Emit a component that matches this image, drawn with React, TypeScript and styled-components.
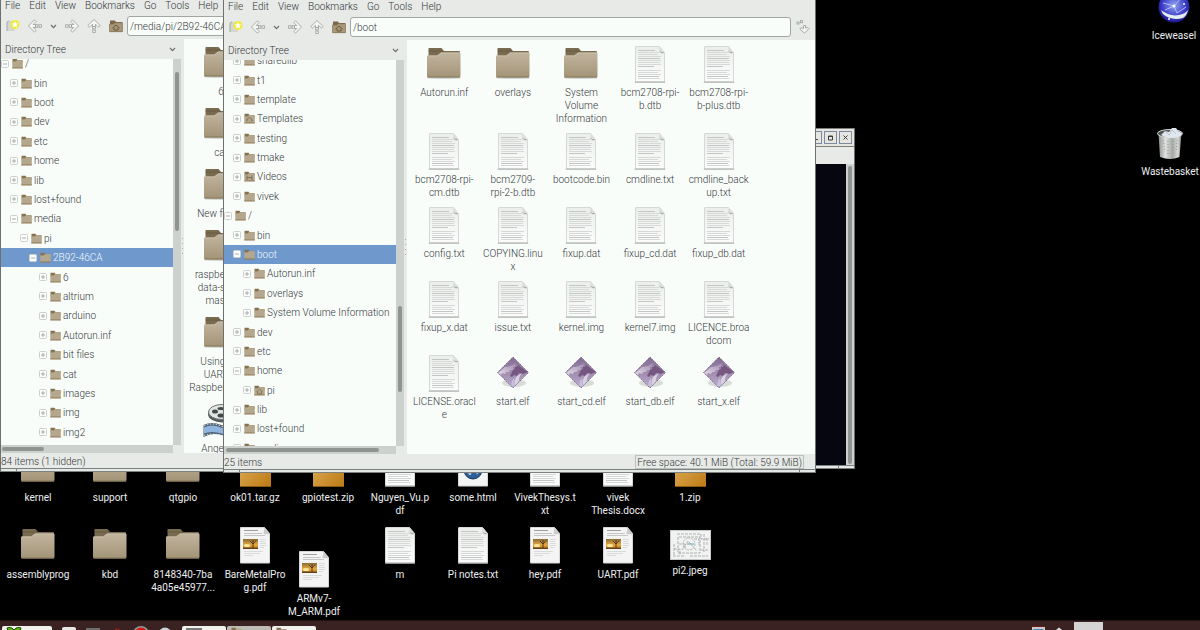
import React, { useId } from "react";
import styled, { createGlobalStyle, css } from "styled-components";

const GlobalStyle = createGlobalStyle`
  *, *::before, *::after { box-sizing: border-box; }
  body { margin: 0; background: #000; font: 300 10px/13px Roboto, "Liberation Sans", sans-serif; color: #34383a; }
  button, input { font: inherit; color: inherit; margin: 0; padding: 0; border: 0; background: none; }
  ul { list-style: none; margin: 0; padding: 0; }
  svg { display: block; flex: none; }
`;

/* ---------- drawings ---------- */

const FolderIcon = () => {
  const id = useId();
  return (
    <svg width="36" height="32" viewBox="0 0 36 32" aria-hidden="true">
      <defs>
        <linearGradient id={id} x1="0" y1="0" x2="0" y2="1">
          <stop offset="0" stopColor="#c2b59f" />
          <stop offset="1" stopColor="#a39477" />
        </linearGradient>
      </defs>
      <ellipse cx="18" cy="31" rx="17" ry="1" fill="#000" opacity="0.15" />
      <path d="M2.500 10V1.500q0-.5.5-.5h12.500l2.500 3H33q1 0 1 1v5z" fill="#796b50" />
      <path d="M2.500 4h14l1 1.500H34" stroke="#5d5139" strokeWidth="1" fill="none" opacity="0.6" />
      <path d="M1 9.500Q1 8.500 2 8.500h9l4-3h18.500q1 0 1 1V29q0 1.500-1.500 1.500H2.500Q1 30.500 1 29z" fill={`url(#${id})`} />
      <path d="M1.500 9h10l4-3H34" stroke="#cabea8" fill="none" />
      <path d="M1.500 30H34" stroke="#85765a" fill="none" />
    </svg>
  );
};

const SmallFolderIcon = ({ emblem }: { emblem?: string }) => (
  <svg width="11" height="11" viewBox="0 0 11 11" aria-hidden="true">
    <path d="M.5 5V.8h4l1 1.200h5V5z" fill="#85724f" />
    <path d="M.3 4h3.200L5 2.800h5.800V10H.3z" fill="#b5a78d" />
    <path d="M.3 3.800h3.200L5 2.600h5.800" stroke="#cabfa9" strokeWidth=".6" fill="none" />
    <path d="M.3 10h10.500" stroke="#8f7650" strokeWidth="1" />
    {emblem === "home" && <path d="M2.500 6.800 5.500 4.300l3 2.500M3.600 6.500V9h3.800V6.500" stroke="#7d6f55" strokeWidth=".9" fill="none" />}
    {emblem === "template" && <path d="M3 8.500V6l2.500-1.500L8.500 7 7 8.500" stroke="#7d6f55" fill="none" />}
    {emblem === "video" && <path d="M3 4.500V9M8 4.500V9M3 6.500h5" stroke="#7d6f55" fill="none" />}
  </svg>
);

const textLines: [number, number][] = [
  [4.5, 17], [6.5, 22], [8.5, 20], [10.5, 23], [12.5, 22], [14.5, 23], [16.5, 22], [18.5, 23],
  [20.5, 16], [24.5, 23], [26.5, 20], [28.5, 23], [30.5, 21], [32.5, 22],
];

const DocIcon = () => {
  const id = useId();
  return (
    <svg width="32" height="37" viewBox="0 0 32 37" aria-hidden="true">
      <defs>
        <linearGradient id={id} x1="0" y1="0" x2="0" y2="1">
          <stop offset="0" stopColor="#eceeec" />
          <stop offset="1" stopColor="#fbfcfb" />
        </linearGradient>
      </defs>
      <ellipse cx="16" cy="36.200" rx="16" ry=".8" fill="#000" opacity="0.2" />
      <path d="M1.500 1Q1.500.5 2 .5h23.500l5 6V36h-29z" fill={`url(#${id})`} stroke="#d5d8d6" />
      <path d="M1 36h30" stroke="#b0b3b1" />
      {textLines.map(([y, w], i) => (
        <path key={y} d={`M4 ${y}h${w}`} stroke={i % 4 ? "#d6d9d7" : "#c3c7c4"} />
      ))}
      <path d="M25.500.5l-1 6.500 6.500.5z" fill="#dcdfdd" />
      <path d="M26.500 5.500l1 1.200h2" fill="none" stroke="#9a9d9b" />
    </svg>
  );
};

const PdfIcon = () => {
  const id = useId();
  return (
    <svg width="32" height="37" viewBox="0 0 32 37" aria-hidden="true">
      <defs>
        <linearGradient id={id} x1="0" y1="0" x2="0" y2="1">
          <stop offset="0" stopColor="#8b6a35" />
          <stop offset=".6" stopColor="#e8ab45" />
          <stop offset=".8" stopColor="#c98524" />
          <stop offset="1" stopColor="#3d2a16" />
        </linearGradient>
      </defs>
      <path d="M1.500.500h24l5 6V36h-29z" fill="#f3f4f3" stroke="#d5d7d5" />
      <path d="M5 3.500h14" stroke="#9da09e" />
      <path d="M5 6.500h18M5 8.500h21" stroke="#c4c7c5" />
      <path d="M21 12.500h6M21 14.500h5M21 16.500h6M21 18.500h6M21 20.500h4M5 24.500h19M5 26.500h16M5 28.500h9" stroke="#d8dbd9" />
      <rect x="4" y="12" width="15" height="10" fill={`url(#${id})`} />
      <ellipse cx="8" cy="18.500" rx="3" ry="1.500" fill="#ffe9a0" />
      <path d="M14 21v-4l-3-3M14 17l3-3.500M14 17v-4" stroke="#4a2f14" strokeWidth=".9" fill="none" />
      <path d="M25.500.500l-1 6.500 6.500.500z" fill="#c9ccca" />
    </svg>
  );
};

const ZipIcon = () => {
  const id = useId();
  return (
    <svg width="31" height="36" viewBox="0 0 31 36" aria-hidden="true">
      <defs>
        <linearGradient id={id} x1="0" y1="0" x2="1" y2="1">
          <stop offset="0" stopColor="#e2b25c" />
          <stop offset="1" stopColor="#bd7a16" />
        </linearGradient>
      </defs>
      <rect width="31" height="36" fill={`url(#${id})`} />
      <path d="M0 35.500h31" stroke="#8a5a12" />
    </svg>
  );
};

const HtmlIcon = () => (
  <svg width="32" height="37" viewBox="0 0 32 37" aria-hidden="true">
    <path d="M1.500.500h29V36h-29z" fill="#f3f5f4" stroke="#d5d7d5" />
    <circle cx="16" cy="20" r="9" fill="#2f5f96" stroke="#16355c" />
    <path d="M10 20q2-4 5-1l-1 6-2 0zM18 18l5 1-3 6z" fill="#b4c8da" />
  </svg>
);

const ElfIcon = () => {
  const id = useId();
  return (
    <svg width="34" height="37" viewBox="0 0 34 37" aria-hidden="true">
      <defs>
        <linearGradient id={id} x1="0" y1="0" x2="0" y2="1">
          <stop offset="0" stopColor="#836b92" />
          <stop offset=".5" stopColor="#a18cae" />
          <stop offset="1" stopColor="#b9add2" />
        </linearGradient>
        <linearGradient id={`${id}g`} x1="0" y1="1" x2="1" y2="0">
          <stop offset="0" stopColor="#e3dbe8" />
          <stop offset="1" stopColor="#a08dae" />
        </linearGradient>
        <clipPath id={`${id}c`}>
          <path d="M17 2.500 32 17.500 17 32.500 2 17.500z" />
        </clipPath>
      </defs>
      <ellipse cx="18" cy="28" rx="12" ry="4" fill="#000" opacity="0.13" />
      <path d="M17 2 32.500 17.500 17 33 1.500 17.500z" fill={`url(#${id})`} />
      <g clipPath={`url(#${id}c)`}>
        <path d="M2 18 9 12q6 0 11-4l-1 4-2 0 0 3-3 0-1 2-3 0-1 2-3-1-1 2z" fill={`url(#${id}g)`} />
        <path d="M17 15l2-1 0-2 2 0 1-2 10 7-5 2-4-1-2 3-3-1-2 2-2-1z" fill="#755782" />
        <path d="M20 32q-3-7 1-11l5-3q-4 5-3 10z" fill="#d9d0e0" />
        <path d="M15 31l1-5 2-3 1 8z" fill="#c8bdda" />
      </g>
      <path d="M17 2 32.500 17.500 17 33 1.500 17.500z" fill="none" stroke="#715a80" strokeDasharray="1.500 1" strokeWidth=".8" />
    </svg>
  );
};

const FilmIcon = () => (
  <svg width="36" height="34" viewBox="0 0 36 34" aria-hidden="true">
    <ellipse cx="19" cy="10" rx="14" ry="8.500" fill="#555b5b" />
    <ellipse cx="19" cy="8" rx="13.500" ry="7.500" fill="#dfe3e2" stroke="#6e7474" />
    <ellipse cx="12" cy="7.500" rx="3" ry="2" fill="#424848" />
    <ellipse cx="18" cy="4.500" rx="3.500" ry="1.500" fill="#424848" />
    <ellipse cx="18" cy="11.500" rx="3.500" ry="2" fill="#424848" />
    <ellipse cx="26" cy="8" rx="3" ry="2" fill="#424848" />
    <path d="M.500 21q8-4 18 0t17 0v10q-8 3-17 0t-18 2z" fill="#4d5e70" />
    <path d="M1 23.500q8-4 17 0t17 0v6q-8 3-17 0t-17 0z" fill="#8fb4de" />
    <path d="M1 22q8-4 17 0t17 0M1 31.500q8-3 17 0t17 0" stroke="#e8eef2" strokeDasharray="1.500 1.500" fill="none" />
  </svg>
);

const PictureIcon = () => (
  <svg width="41" height="30" viewBox="0 0 41 30" aria-hidden="true">
    <rect width="41" height="30" fill="#f1f3f2" />
    <rect x=".5" y=".5" width="40" height="29" fill="none" stroke="#c6c9c8" />
    <g stroke="#8f9695" strokeWidth=".7" fill="none" strokeDasharray="3 1">
      <path d="M7 4h24M8 7v16h22V7zM4 14v12M34 4v18M37 8v8M3 26h12M20 26h18M31 4v5h8M31 20h7M12 20l6-9 9 10M9 14h6v4M24 9h5v6M4 19h6v6" />
      <circle cx="19" cy="14" r="6" strokeDasharray="2 1" />
    </g>
    <path d="M17 14h7" stroke="#5fa7b0" />
  </svg>
);

const GlobeIcon = () => {
  const id = useId();
  return (
    <svg width="32" height="32" viewBox="0 0 32 32" aria-hidden="true">
      <defs>
        <radialGradient id={id} cx=".5" cy=".45" r=".55">
          <stop offset="0" stopColor="#8fa2ee" />
          <stop offset=".7" stopColor="#3b3cc9" />
          <stop offset="1" stopColor="#1d1784" />
        </radialGradient>
      </defs>
      <circle cx="16" cy="16" r="15.500" fill={`url(#${id})`} />
      <path d="M5 12l11 3 8-9M16 15l3 7 9-6M16 15l-9 4" stroke="#b9c4ff" strokeWidth=".9" fill="none" />
      <circle cx="16" cy="15" r="1.500" fill="#fff" />
      <path d="M3 19q9 7 18 5 6-1 9-5-1 5-5 8-12 3-20-4z" fill="#e4eef0" />
      <circle cx="26" cy="13" r="1" fill="#fff" />
      <circle cx="11" cy="28" r="1" fill="#fff" />
    </svg>
  );
};

const TrashIcon = () => {
  const id = useId();
  return (
    <svg width="28" height="34" viewBox="0 0 28 34" aria-hidden="true">
      <defs>
        <linearGradient id={id} x1="0" y1="0" x2="1" y2="0">
          <stop offset="0" stopColor="#8b8f8c" />
          <stop offset=".3" stopColor="#dfe2df" />
          <stop offset=".6" stopColor="#a6aaa7" />
          <stop offset=".85" stopColor="#d6d9d6" />
          <stop offset="1" stopColor="#7a7e7b" />
        </linearGradient>
      </defs>
      <path d="M2.500 7h23l-2 24q-9 4-19.500 0z" fill={`url(#${id})`} />
      <ellipse cx="14" cy="7.500" rx="12.500" ry="4" fill="#4c504e" stroke="#d3d7d4" />
      <path d="M5 9l4-4 4 1 3-4 4 0 2 3 4 2-1 3-7 2-7 0z" fill="#dfe6ee" />
      <path d="M9 5l4 4 3-5 4 4" stroke="#b3bdc8" fill="none" strokeWidth=".8" />
      <path d="M7 14l2 12M12 15v13M17 15v13M21 14l-1 12" stroke="#949995" strokeDasharray="1 2" fill="none" />
    </svg>
  );
};

const Chevron = () => (
  <svg width="7" height="7" viewBox="0 0 7 7" aria-hidden="true">
    <path d="M1 2l2.500 2.700L6 2" stroke="#6c716f" strokeWidth="1.200" fill="none" />
  </svg>
);

const ArrowIcon = ({ turn = 0 }: { turn?: number }) => (
  <svg width="14" height="14" viewBox="0 0 14 14" aria-hidden="true">
    <g transform={`rotate(${turn} 7 7)`} stroke="#989c9a" strokeWidth=".8" fill="#f4f7f4">
      <path d="M6.500.8 8.200 2.500 5.200 5.500H7.500v3H5.200L8.200 11.500 6.500 13.200.5 7z" />
      <rect x="7.500" y="5.800" width="2.400" height="2.400" />
      <rect x="11" y="5.800" width="2.400" height="2.400" />
    </g>
  </svg>
);

const NewTabIcon = () => (
  <svg width="14" height="14" viewBox="0 0 14 14" aria-hidden="true">
    <path d="M1 12V4q0-2 2-2h6v10z" fill="#d3d7d2" />
    <path d="M1 12V4q0-2 2-2" fill="none" stroke="#a5aaa4" />
    <circle cx="9" cy="5.500" r="4.500" fill="#f1ea3c" />
    <path d="M9 2l1 2.300 2.400.200-1.800 1.600.6 2.400L9 7.300 6.800 8.500l.6-2.400L5.600 4.500 8 4.300z" fill="#fff" />
  </svg>
);

const HomeIcon = () => (
  <svg width="14" height="14" viewBox="0 0 14 14" aria-hidden="true">
    <path d="M1 12.500V1.500h5l1 1.500h6v9.500z" fill="#7b6848" />
    <path d="M.5 5h4l1.500-1.300h7.500v9H.5z" fill="#a8977a" stroke="#7a6545" strokeWidth=".6" />
    <path d="M3.500 9 7 6l3.500 3M5 8.500V11h4V8.500" stroke="#6b5a40" fill="none" />
  </svg>
);

const JumpIcon = () => (
  <svg width="14" height="14" viewBox="0 0 14 14" aria-hidden="true">
    <g stroke="#989c9a" strokeWidth=".8" fill="#f1f4f1">
      <path d="M7.500 5.500h2V8l2.500-.5 1 1-4.500 4.700L3.800 9l1-1.200 2.700.7z" />
      <rect x="1" y="2" width="2" height="2" />
      <rect x="4.500" y=".7" width="2" height="2" />
    </g>
  </svg>
);

const RaspberryMenuIcon = () => (
  <svg width="16" height="8" viewBox="0 0 16 8" aria-hidden="true">
    <path d="M1 1q4-2 6 1l1 1 1-1q2-3 6-1l-2 6H3z" fill="#58b013" stroke="#1d4a06" />
  </svg>
);

const icons = {
  folder: FolderIcon, doc: DocIcon, pdf: PdfIcon, zip: ZipIcon, html: HtmlIcon,
  elf: ElfIcon, film: FilmIcon, picture: PictureIcon, globe: GlobeIcon, trash: TrashIcon,
};
type IconKind = keyof typeof icons;

/* ---------- desktop ---------- */

const Screen = styled.main`
  display: grid;
  grid-template-rows: minmax(0, 1fr) 10px;
  height: 100vh;
  overflow: hidden;
  background: #000;
`;

const Desktop = styled.section`
  position: relative;
  overflow: hidden;
`;

const Tile = styled.button`
  display: flex;
  flex-direction: column;
  align-items: center;
  gap: 3px;
  width: 100%;
`;

const TileIcon = styled.span<{ $kind: IconKind }>`
  display: flex;
  justify-content: center;
  align-items: center;
  height: ${({ $kind }) => ($kind === "picture" ? 31 : 37)}px;
  ${({ $kind }) => $kind === "folder" && css`align-items: flex-start; padding-top: 1px;`}
`;

const TileLabel = styled.span`
  white-space: pre;
  text-align: center;
`;

const Shortcut = styled.div<{ $x: number; $y: number; $fromRight?: boolean }>`
  position: absolute;
  top: ${({ $y }) => $y}px;
  ${({ $fromRight, $x }) => ($fromRight ? `right: ${$x}px;` : `left: ${$x}px;`)}
  width: 74px;
  color: #eceef0;
  font-weight: 400;

  ${Tile} { gap: 4px; }
`;

type FileEntry = { kind: IconKind; name: string };

const FileTile = ({ kind, name }: FileEntry) => {
  const Icon = icons[kind];
  return (
    <Tile type="button">
      <TileIcon $kind={kind}><Icon /></TileIcon>
      <TileLabel>{name}</TileLabel>
    </Tile>
  );
};

const shortcuts: (FileEntry & { x: number; y: number; fromRight?: boolean })[] = [
  { kind: "folder", name: "kernel", x: 1, y: 450 },
  { kind: "folder", name: "support", x: 73, y: 450 },
  { kind: "folder", name: "qtgpio", x: 146, y: 450 },
  { kind: "zip", name: "ok01.tar.gz", x: 218, y: 450 },
  { kind: "zip", name: "gpiotest.zip", x: 291, y: 450 },
  { kind: "doc", name: "Nguyen_Vu.p\ndf", x: 363, y: 450 },
  { kind: "html", name: "some.html", x: 436, y: 450 },
  { kind: "doc", name: "VivekThesys.t\nxt", x: 508, y: 450 },
  { kind: "doc", name: "vivek\nThesis.docx", x: 581, y: 450 },
  { kind: "zip", name: "1.zip", x: 653, y: 450 },
  { kind: "folder", name: "assemblyprog", x: 1, y: 527 },
  { kind: "folder", name: "kbd", x: 73, y: 527 },
  { kind: "folder", name: "8148340-7ba\n4a05e45977...", x: 146, y: 527 },
  { kind: "pdf", name: "BareMetalPro\ng.pdf", x: 218, y: 527 },
  { kind: "pdf", name: "ARMv7-\nM_ARM.pdf", x: 277, y: 551 },
  { kind: "doc", name: "m", x: 363, y: 527 },
  { kind: "doc", name: "Pi notes.txt", x: 436, y: 527 },
  { kind: "pdf", name: "hey.pdf", x: 508, y: 527 },
  { kind: "pdf", name: "UART.pdf", x: 581, y: 527 },
  { kind: "picture", name: "pi2.jpeg", x: 653, y: 529 },
  { kind: "globe", name: "Iceweasel", x: -11, y: -12, fromRight: true },
  { kind: "trash", name: "Wastebasket", x: -7, y: 124, fromRight: true },
];

/* ---------- windows ---------- */

const Window = styled.article<{ $x: number; $y: number; $width: number }>`
  position: absolute;
  left: ${({ $x }) => $x}px;
  top: ${({ $y }) => $y}px;
  width: ${({ $width }) => $width}px;
  display: flex;
  flex-direction: column;
  background: #e7eae7;
  border: solid #6d706f;
  border-width: 0 1px;
`;

const MenuBar = styled.nav`
  display: flex;
  gap: 9px;
  height: 14px;
  padding-left: 4px;
`;

const MenuItem = styled.button`
  height: 13px;
`;

const ToolBar = styled.div`
  display: flex;
  align-items: center;
  gap: 8px;
  height: 26px;
  padding: 0 5px;
`;

const ToolButton = styled.button`
  display: flex;
  flex: none;
`;

const PathInput = styled.input`
  flex: 1;
  min-width: 0;
  height: 20px;
  margin: 0 -3px 0 -4px;
  padding: 0 2px;
  border: 1px solid #a3a7a4;
  border-radius: 3px;
  background: #f9fdfa;
  outline: 0;
`;

const Body = styled.div`
  display: grid;
  grid-template: minmax(0, 1fr) / 180px 3px minmax(0, 1fr);
  height: 414px;
`;

const SidePane = styled.aside`
  display: grid;
  grid-template: 20px minmax(0, 1fr) 8px / minmax(0, 1fr) 8px;
`;

const SideHeader = styled.header`
  grid-column: 1 / -1;
  display: flex;
  align-items: center;
  justify-content: space-between;
  padding: 0 5px 0 4px;
`;

const TreeView = styled.div`
  overflow: hidden;
  background: #f9fdfa;
`;

const TreeList = styled.ul<{ $rows: number; $height: number; $scrolled: number }>`
  display: grid;
  grid-template-rows: repeat(${({ $rows }) => $rows}, minmax(0, 1fr));
  height: ${({ $height }) => $height}px;
  margin-top: -${({ $scrolled }) => $scrolled}px;
`;

const indents = [0, 9, 19, 28, 38];

const TreeRow = styled.li<{ $level: number; $selected?: boolean }>`
  display: flex;
  align-items: center;
  padding-left: ${({ $level }) => indents[$level]}px;
  white-space: nowrap;
  ${({ $selected }) => $selected && css`background: #6f98cc; color: #f4f8fc;`}
`;

const Expander = styled.button`
  display: flex;
  flex: none;
  margin-right: 3px;
`;

const TreeLabel = styled.span`
  margin-left: 2px;
`;

const VScroll = styled.div`
  display: flow-root;
  padding: 0 2px;
  background: #cdd1ce;
`;

const HScroll = styled.div`
  padding: 2px 0;
  background: #cdd1ce;
`;

const Thumb = styled.div<{ $vertical?: boolean; $start: number; $size: number }>`
  border-radius: 2px;
  background: #8f9491;
  ${({ $vertical, $start, $size }) =>
    $vertical
      ? css`width: 4px; height: ${$size}px; margin-top: ${$start}px;`
      : css`height: 4px; width: ${$size}px; margin-left: ${$start}px;`}
`;

const Splitter = styled.div`
  display: flex;
  flex-direction: column;
  align-items: center;
  justify-content: center;
  gap: 4px;
`;

const Grip = styled.i`
  width: 1px;
  height: 1px;
  background: #a9aeab;
`;

const FilePane = styled.div<{ $columns: number }>`
  display: grid;
  grid-template-columns: repeat(${({ $columns }) => $columns}, minmax(0, 1fr));
  align-content: start;
  row-gap: 8px;
  padding: 6px 62px 0 3px;
  overflow: hidden;
  background: #f9fdfa;
`;

const StatusBar = styled.footer`
  display: flex;
  justify-content: space-between;
  height: 15px;
  padding: 1px 11px 0 0;
  line-height: 15px;
`;

const FreeSpace = styled.span`
  height: 14px;
  padding: 0 1px;
  border: 1px solid #bcc0bd;
  line-height: 13px;
`;

const ResizeEdge = styled.div`
  display: flex;
  justify-content: space-between;
  height: 4px;
  padding: 0 15px;
  border: solid #7c807e;
  border-width: 1px 0;
  background: #e3e8e7;

  &::before, &::after {
    content: "";
    width: 1px;
    height: 2px;
    background: #7c807e;
  }
`;

type Node = { name: string; level: number; open?: boolean; selected?: boolean; emblem?: string };

const n = (level: number, name: string, extra: Partial<Node> = {}): Node => ({ level, name, ...extra });

type Manager = {
  x: number; y: number; width: number; path: string; status: string; free?: string;
  tree: Node[]; treeHeight: number; treeScrolled: number;
  vThumb: [number, number]; hThumb: [number, number];
  columns: number; files: FileEntry[];
};

const FileManager = (m: Manager) => (
  <Window $x={m.x} $y={m.y} $width={m.width}>
    <MenuBar>
      {["File", "Edit", "View", "Bookmarks", "Go", "Tools", "Help"].map((t) => (
        <MenuItem type="button" key={t}>{t}</MenuItem>
      ))}
    </MenuBar>
    <ToolBar>
      <ToolButton type="button" aria-label="New tab"><NewTabIcon /></ToolButton>
      <ToolButton type="button" aria-label="Back"><ArrowIcon /></ToolButton>
      <ToolButton type="button" aria-label="History"><Chevron /></ToolButton>
      <ToolButton type="button" aria-label="Forward"><ArrowIcon turn={180} /></ToolButton>
      <ToolButton type="button" aria-label="Up"><ArrowIcon turn={90} /></ToolButton>
      <ToolButton type="button" aria-label="Home"><HomeIcon /></ToolButton>
      <PathInput aria-label="Path" defaultValue={m.path} />
      <ToolButton type="button" aria-label="Go"><JumpIcon /></ToolButton>
    </ToolBar>
    <Body>
      <SidePane>
        <SideHeader>
          Directory Tree
          <ToolButton type="button" aria-label="Side pane mode"><Chevron /></ToolButton>
        </SideHeader>
        <TreeView>
          <TreeList $rows={m.tree.length} $height={m.treeHeight} $scrolled={m.treeScrolled}>
            {m.tree.map((node, i) => (
              <TreeRow key={i} $level={node.level} $selected={node.selected}>
                <Expander type="button" aria-label={node.open ? "Collapse" : "Expand"}>
                  <svg width="8" height="8" viewBox="0 0 8 8" aria-hidden="true">
                    <rect x=".5" y=".5" width="7" height="7" rx="1" fill="#fbfdfb" stroke="#cccfcd" />
                    <path d={node.open ? "M2 4h4" : "M2 4h4M4 2v4"} stroke="#a0a4a2" strokeWidth=".9" />
                  </svg>
                </Expander>
                <SmallFolderIcon emblem={node.emblem} />
                <TreeLabel>{node.name}</TreeLabel>
              </TreeRow>
            ))}
          </TreeList>
        </TreeView>
        <VScroll><Thumb $vertical $start={m.vThumb[0]} $size={m.vThumb[1]} /></VScroll>
        <HScroll><Thumb $start={m.hThumb[0]} $size={m.hThumb[1]} /></HScroll>
      </SidePane>
      <Splitter><Grip /><Grip /><Grip /><Grip /></Splitter>
      <FilePane $columns={m.columns}>
        {m.files.map((f) => <FileTile key={f.name} {...f} />)}
      </FilePane>
    </Body>
    <StatusBar>
      {m.status}
      {m.free && <FreeSpace>{m.free}</FreeSpace>}
    </StatusBar>
    <ResizeEdge />
  </Window>
);

const usbTree = [
  n(0, "/", { open: true }), n(1, "bin"), n(1, "boot"), n(1, "dev"), n(1, "etc"), n(1, "home"),
  n(1, "lib"), n(1, "lost+found"), n(1, "media", { open: true }), n(2, "pi", { open: true }),
  n(3, "2B92-46CA", { open: true, selected: true }), n(4, "6"), n(4, "altrium"), n(4, "arduino"),
  n(4, "Autorun.inf"), n(4, "bit files"), n(4, "cat"), n(4, "images"), n(4, "img"), n(4, "img2"),
];

const bootTree = [
  n(1, "sharedlib"), n(1, "t1"), n(1, "template"), n(1, "Templates", { emblem: "template" }),
  n(1, "testing"), n(1, "tmake"), n(1, "Videos", { emblem: "video" }), n(1, "vivek"),
  n(0, "/", { open: true }), n(1, "bin"), n(1, "boot", { open: true, selected: true }),
  n(2, "Autorun.inf"), n(2, "overlays"), n(2, "System Volume Information"), n(1, "dev"),
  n(1, "etc"), n(1, "home", { open: true }), n(2, "pi", { emblem: "home" }), n(1, "lib"),
  n(1, "lost+found"), n(1, "media"),
];

const f = (kind: IconKind, name: string): FileEntry => ({ kind, name });

const usbFiles = [
  f("folder", "6"), f("folder", "cat"), f("folder", "New folder"),
  f("folder", "raspberry-pi\ndata-sheet\nmaster"), f("folder", "Using the\nUART in\nRaspberry Pi 2"),
  f("film", "Angel.avi"),
];

const bootFiles = [
  f("folder", "Autorun.inf"), f("folder", "overlays"), f("folder", "System\nVolume\nInformation"),
  f("doc", "bcm2708-rpi-\nb.dtb"), f("doc", "bcm2708-rpi-\nb-plus.dtb"),
  f("doc", "bcm2708-rpi-\ncm.dtb"), f("doc", "bcm2709-\nrpi-2-b.dtb"), f("doc", "bootcode.bin"),
  f("doc", "cmdline.txt"), f("doc", "cmdline_back\nup.txt"),
  f("doc", "config.txt"), f("doc", "COPYING.linu\nx"), f("doc", "fixup.dat"),
  f("doc", "fixup_cd.dat"), f("doc", "fixup_db.dat"),
  f("doc", "fixup_x.dat"), f("doc", "issue.txt"), f("doc", "kernel.img"),
  f("doc", "kernel7.img"), f("doc", "LICENCE.broa\ndcom"),
  f("doc", "LICENSE.oracl\ne"), f("elf", "start.elf"), f("elf", "start_cd.elf"),
  f("elf", "start_db.elf"), f("elf", "start_x.elf"),
];

/* ---------- terminal ---------- */

const TitleBar = styled.header`
  display: flex;
  justify-content: flex-end;
  align-items: center;
  gap: 2px;
  height: 19px;
  padding-right: 2px;
  border: solid #7c807e;
  border-width: 1px 0;
  background: #e6e5e0;
`;

const WindowButton = styled.button`
  display: grid;
  place-items: center;
  width: 13px;
  height: 13px;
  border: 1px solid #7b8ba3;
`;

const TerminalMenu = styled.div`
  height: 17px;
`;

const TerminalBody = styled.div`
  display: grid;
  grid-template-columns: minmax(0, 1fr) 8px;
  height: 301px;
  background: #05060f;
`;

const controls = [
  { label: "Minimise", d: "M1 5.500h5" },
  { label: "Maximise", d: "M1.500 2h4v4h-4zM1.500 2.500h4" },
  { label: "Close", d: "M1.500 1.500l4 4M5.500 1.500l-4 4" },
];

/* ---------- task bar ---------- */

const TaskBar = styled.footer`
  display: flex;
  align-items: flex-start;
  justify-content: space-between;
  padding: 1px 97px 0 2px;
  border-top: 1px solid #241314;
  background: #3a2122;
  overflow: hidden;
`;

const TaskGroup = styled.div`
  display: flex;
  align-items: flex-start;
  gap: 10px;
  padding-top: 4px;
`;

const Tasks = styled.div`
  display: flex;
  gap: 1px;
`;

const Task = styled.button<{ $width: number; $active?: boolean }>`
  display: flex;
  width: ${({ $width }) => $width}px;
  height: 24px;
  padding: 1px 4px;
  border-radius: 2px;
  background: ${({ $active }) => ($active ? "#bdbbb3" : "#f1f1ee")};
`;

const Launcher = styled.button`
  display: flex;
  width: 14px;
`;

const Tray = styled.div`
  display: flex;
  align-items: flex-start;
  gap: 12px;
`;

const CpuGraph = styled.div`
  width: 29px;
  height: 24px;
  background: #d3d3d3;
`;

const launchers = [
  { label: "Files", art: <path d="M0 6V3q0-2 2-2h10q2 0 2 2v3z" fill="#e6e8e5" /> },
  { label: "Terminal", art: <path d="M0 2h14v6H0z" fill="#6d6d70" /> },
  { label: "Mathematica", art: <path d="M3 6l2-2 1-2 2 2 1-2 1 3 2 1z" fill="#a8201d" /> },
  { label: "Wolfram", art: <><circle cx="7" cy="8" r="8" fill="#8d9a92" /><circle cx="7" cy="8" r="6.500" fill="#d01a1a" /></> },
  { label: "Browser", art: <><circle cx="7" cy="8" r="6.500" fill="#c9d2da" /><circle cx="7" cy="8" r="3.500" fill="#5379b2" /></> },
];

export default function App() {
  return (
    <>
      <GlobalStyle />
      <Screen>
        <Desktop>
          {shortcuts.map(({ x, y, fromRight, kind, name }) => (
            <Shortcut key={name} $x={x} $y={y} $fromRight={fromRight}>
              <FileTile kind={kind} name={name} />
            </Shortcut>
          ))}

          <Window $x={500} $y={128} $width={355}>
            <TitleBar>
              {controls.map((c) => (
                <WindowButton type="button" key={c.label} aria-label={c.label}>
                  <svg width="7" height="7" viewBox="0 0 7 7" aria-hidden="true">
                    <path d={c.d} stroke="#3c3f40" fill="none" />
                  </svg>
                </WindowButton>
              ))}
            </TitleBar>
            <TerminalMenu />
            <TerminalBody>
              <div />
              <VScroll><Thumb $vertical $start={2} $size={298} /></VScroll>
            </TerminalBody>
            <ResizeEdge />
          </Window>

          <FileManager
            x={0} y={-1} width={318} path="/media/pi/2B92-46CA" status="84 items (1 hidden)"
            tree={usbTree} treeHeight={388} treeScrolled={5}
            vThumb={[13, 159]} hThumb={[1, 42]} columns={1} files={usbFiles}
          />
          <FileManager
            x={223} y={0} width={593} path="/boot" status="25 items"
            free="Free space: 40.1 MiB (Total: 59.9 MiB)"
            tree={bootTree} treeHeight={407} treeScrolled={9}
            vThumb={[246, 86]} hThumb={[2, 153]} columns={5} files={bootFiles}
          />
        </Desktop>

        <TaskBar>
          <TaskGroup>
            <Task type="button" $width={50} aria-label="Menu"><RaspberryMenuIcon /></Task>
            {launchers.map((l) => (
              <Launcher type="button" key={l.label} aria-label={l.label}>
                <svg width="14" height="16" viewBox="0 0 14 16" aria-hidden="true">{l.art}</svg>
              </Launcher>
            ))}
            <Tasks>
              <Task type="button" $width={44} aria-label="Terminal window">
                <svg width="16" height="8" viewBox="0 0 16 8" aria-hidden="true"><path d="M0 1h16v7H0z" fill="#77797a" /></svg>
              </Task>
              <Task type="button" $width={44} $active aria-label="boot"><SmallFolderIcon /></Task>
              <Task type="button" $width={44} aria-label="2B92-46CA"><SmallFolderIcon /></Task>
            </Tasks>
          </TaskGroup>
          <Tray>
            <svg width="30" height="12" viewBox="0 0 30 12" aria-hidden="true">
              <path d="M0 5h13v6H0z" fill="#c7c9ca" />
              <path d="M1.500 7h10v5h-10z" fill="#5b7fae" />
              <path d="M0 4.500h13" stroke="#6c1715" />
              <path d="M24 8l3-2.500L30 8z" fill="#e3e3e3" />
            </svg>
            <CpuGraph />
          </Tray>
        </TaskBar>
      </Screen>
    </>
  );
}
